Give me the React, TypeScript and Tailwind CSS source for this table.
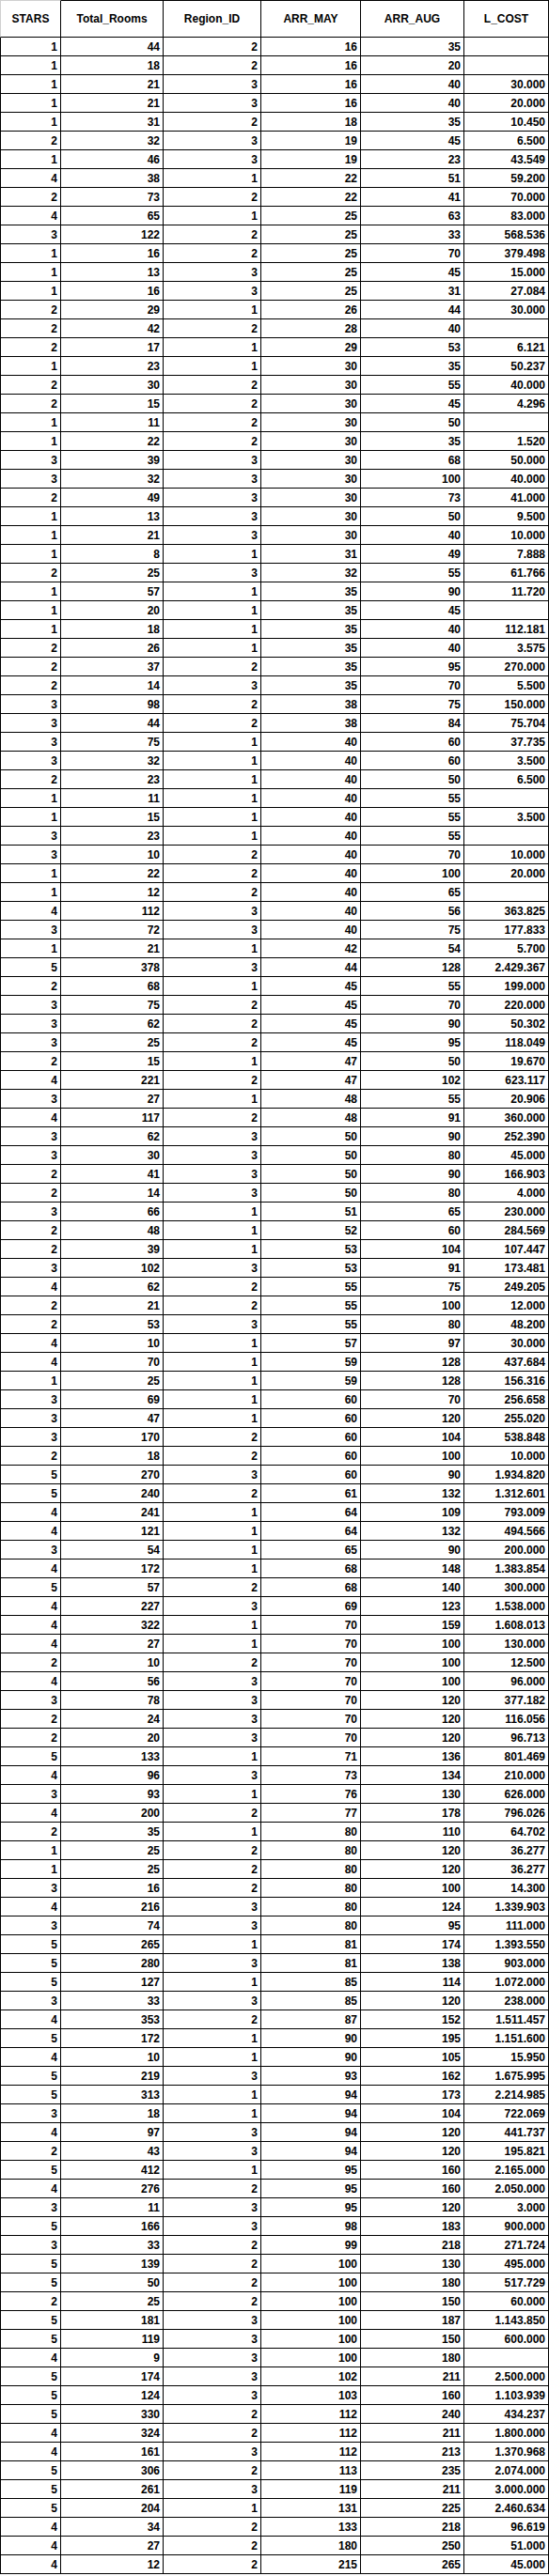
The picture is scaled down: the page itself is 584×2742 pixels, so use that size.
type Row = [number, number, number, number, number, string]

const COLUMNS = ['STARS', 'Total_Rooms', 'Region_ID', 'ARR_MAY', 'ARR_AUG', 'L_COST']

const ROWS: Row[] = [
  [1, 44, 2, 16, 35, ''],
  [1, 18, 2, 16, 20, ''],
  [1, 21, 3, 16, 40, '30.000'],
  [1, 21, 3, 16, 40, '20.000'],
  [1, 31, 2, 18, 35, '10.450'],
  [2, 32, 3, 19, 45, '6.500'],
  [1, 46, 3, 19, 23, '43.549'],
  [4, 38, 1, 22, 51, '59.200'],
  [2, 73, 2, 22, 41, '70.000'],
  [4, 65, 1, 25, 63, '83.000'],
  [3, 122, 2, 25, 33, '568.536'],
  [1, 16, 2, 25, 70, '379.498'],
  [1, 13, 3, 25, 45, '15.000'],
  [1, 16, 3, 25, 31, '27.084'],
  [2, 29, 1, 26, 44, '30.000'],
  [2, 42, 2, 28, 40, ''],
  [2, 17, 1, 29, 53, '6.121'],
  [1, 23, 1, 30, 35, '50.237'],
  [2, 30, 2, 30, 55, '40.000'],
  [2, 15, 2, 30, 45, '4.296'],
  [1, 11, 2, 30, 50, ''],
  [1, 22, 2, 30, 35, '1.520'],
  [3, 39, 3, 30, 68, '50.000'],
  [3, 32, 3, 30, 100, '40.000'],
  [2, 49, 3, 30, 73, '41.000'],
  [1, 13, 3, 30, 50, '9.500'],
  [1, 21, 3, 30, 40, '10.000'],
  [1, 8, 1, 31, 49, '7.888'],
  [2, 25, 3, 32, 55, '61.766'],
  [1, 57, 1, 35, 90, '11.720'],
  [1, 20, 1, 35, 45, ''],
  [1, 18, 1, 35, 40, '112.181'],
  [2, 26, 1, 35, 40, '3.575'],
  [2, 37, 2, 35, 95, '270.000'],
  [2, 14, 3, 35, 70, '5.500'],
  [3, 98, 2, 38, 75, '150.000'],
  [3, 44, 2, 38, 84, '75.704'],
  [3, 75, 1, 40, 60, '37.735'],
  [3, 32, 1, 40, 60, '3.500'],
  [2, 23, 1, 40, 50, '6.500'],
  [1, 11, 1, 40, 55, ''],
  [1, 15, 1, 40, 55, '3.500'],
  [3, 23, 1, 40, 55, ''],
  [3, 10, 2, 40, 70, '10.000'],
  [1, 22, 2, 40, 100, '20.000'],
  [1, 12, 2, 40, 65, ''],
  [4, 112, 3, 40, 56, '363.825'],
  [3, 72, 3, 40, 75, '177.833'],
  [1, 21, 1, 42, 54, '5.700'],
  [5, 378, 3, 44, 128, '2.429.367'],
  [2, 68, 1, 45, 55, '199.000'],
  [3, 75, 2, 45, 70, '220.000'],
  [3, 62, 2, 45, 90, '50.302'],
  [3, 25, 2, 45, 95, '118.049'],
  [2, 15, 1, 47, 50, '19.670'],
  [4, 221, 2, 47, 102, '623.117'],
  [3, 27, 1, 48, 55, '20.906'],
  [4, 117, 2, 48, 91, '360.000'],
  [3, 62, 3, 50, 90, '252.390'],
  [3, 30, 3, 50, 80, '45.000'],
  [2, 41, 3, 50, 90, '166.903'],
  [2, 14, 3, 50, 80, '4.000'],
  [3, 66, 1, 51, 65, '230.000'],
  [2, 48, 1, 52, 60, '284.569'],
  [2, 39, 1, 53, 104, '107.447'],
  [3, 102, 3, 53, 91, '173.481'],
  [4, 62, 2, 55, 75, '249.205'],
  [2, 21, 2, 55, 100, '12.000'],
  [2, 53, 3, 55, 80, '48.200'],
  [4, 10, 1, 57, 97, '30.000'],
  [4, 70, 1, 59, 128, '437.684'],
  [1, 25, 1, 59, 128, '156.316'],
  [3, 69, 1, 60, 70, '256.658'],
  [3, 47, 1, 60, 120, '255.020'],
  [3, 170, 2, 60, 104, '538.848'],
  [2, 18, 2, 60, 100, '10.000'],
  [5, 270, 3, 60, 90, '1.934.820'],
  [5, 240, 2, 61, 132, '1.312.601'],
  [4, 241, 1, 64, 109, '793.009'],
  [4, 121, 1, 64, 132, '494.566'],
  [3, 54, 1, 65, 90, '200.000'],
  [4, 172, 1, 68, 148, '1.383.854'],
  [5, 57, 2, 68, 140, '300.000'],
  [4, 227, 3, 69, 123, '1.538.000'],
  [4, 322, 1, 70, 159, '1.608.013'],
  [4, 27, 1, 70, 100, '130.000'],
  [2, 10, 2, 70, 100, '12.500'],
  [4, 56, 3, 70, 100, '96.000'],
  [3, 78, 3, 70, 120, '377.182'],
  [2, 24, 3, 70, 120, '116.056'],
  [2, 20, 3, 70, 120, '96.713'],
  [5, 133, 1, 71, 136, '801.469'],
  [4, 96, 3, 73, 134, '210.000'],
  [3, 93, 1, 76, 130, '626.000'],
  [4, 200, 2, 77, 178, '796.026'],
  [2, 35, 1, 80, 110, '64.702'],
  [1, 25, 2, 80, 120, '36.277'],
  [1, 25, 2, 80, 120, '36.277'],
  [3, 16, 2, 80, 100, '14.300'],
  [4, 216, 3, 80, 124, '1.339.903'],
  [3, 74, 3, 80, 95, '111.000'],
  [5, 265, 1, 81, 174, '1.393.550'],
  [5, 280, 3, 81, 138, '903.000'],
  [5, 127, 1, 85, 114, '1.072.000'],
  [3, 33, 3, 85, 120, '238.000'],
  [4, 353, 2, 87, 152, '1.511.457'],
  [5, 172, 1, 90, 195, '1.151.600'],
  [4, 10, 1, 90, 105, '15.950'],
  [5, 219, 3, 93, 162, '1.675.995'],
  [5, 313, 1, 94, 173, '2.214.985'],
  [3, 18, 1, 94, 104, '722.069'],
  [4, 97, 3, 94, 120, '441.737'],
  [2, 43, 3, 94, 120, '195.821'],
  [5, 412, 1, 95, 160, '2.165.000'],
  [4, 276, 2, 95, 160, '2.050.000'],
  [3, 11, 3, 95, 120, '3.000'],
  [5, 166, 3, 98, 183, '900.000'],
  [3, 33, 2, 99, 218, '271.724'],
  [5, 139, 2, 100, 130, '495.000'],
  [5, 50, 2, 100, 180, '517.729'],
  [2, 25, 2, 100, 150, '60.000'],
  [5, 181, 3, 100, 187, '1.143.850'],
  [5, 119, 3, 100, 150, '600.000'],
  [4, 9, 3, 100, 180, ''],
  [5, 174, 3, 102, 211, '2.500.000'],
  [5, 124, 3, 103, 160, '1.103.939'],
  [5, 330, 2, 112, 240, '434.237'],
  [4, 324, 2, 112, 211, '1.800.000'],
  [4, 161, 3, 112, 213, '1.370.968'],
  [5, 306, 2, 113, 235, '2.074.000'],
  [5, 261, 3, 119, 211, '3.000.000'],
  [5, 204, 1, 131, 225, '2.460.634'],
  [4, 34, 2, 133, 218, '96.619'],
  [4, 27, 2, 180, 250, '51.000'],
  [4, 12, 2, 215, 265, '45.000'],
]

const GRID = 'grid grid-cols-[65px_109px_104px_106px_110px_90px]'

export default function App() {
  return (
    <div className="w-[584px] bg-white text-black font-['Liberation_Sans',Arial,sans-serif] text-[12px] font-bold">
      {/* header */}
      <div className={`${GRID} h-[40px]`}>
        {COLUMNS.map((c, i) => (
          <div
            key={c}
            className={
              i === 0
                ? 'flex items-center justify-center border-t border-l border-t-[#d0d0d0] border-l-[#d0d0d0] border-r border-b border-black'
                : 'flex items-center justify-center border-t border-r border-b border-black'
            }
          >
            {c}
          </div>
        ))}
      </div>

      {ROWS.map((r, ri) => (
        <div key={ri} className={`${GRID} h-[20px]`}>
          {r.map((v, ci) => (
            <div
              key={ci}
              className={`flex items-center justify-end pr-[3px] border-r border-b border-black leading-none ${ci === 0 ? 'border-l' : ''}`}
            >
              {v}
            </div>
          ))}
        </div>
      ))}
    </div>
  )
}
